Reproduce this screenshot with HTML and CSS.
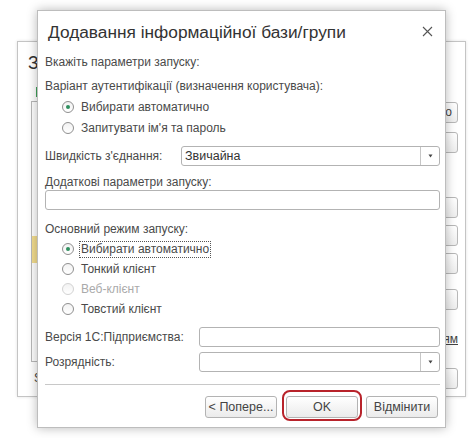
FILE: index.html
```html
<!DOCTYPE html>
<html lang="uk">
<head>
<meta charset="utf-8">
<title>Додавання інформаційної бази/групи</title>
<link rel="stylesheet" href="styles.css">
</head>
<body>
<div class="desk">
  <div class="bgwin">
    <div class="bg-title">З</div>
    <div class="bg-body">
      <div class="bg-left">
        <div class="bg-mark"></div>
        <div class="bg-list">
          <div class="bg-sel"></div>
        </div>
        <div class="bg-foot">S</div>
      </div>
      <div class="bg-right">
        <div class="bg-btn b1">1С:Підприємство</div>
        <div class="bg-btn b2"></div>
        <div class="bg-btn b3"></div>
        <div class="bg-btn b4"></div>
        <div class="bg-btn b5"></div>
        <div class="bg-btn b6"></div>
        <div class="bg-link">Налаштування ям</div>
        <div class="bg-btn b7"></div>
      </div>
    </div>
  </div>

  <div class="dialog">
    <div class="dlg-head">
      <div class="dlg-title">Додавання інформаційної бази/групи</div>
      <div class="dlg-close">
        <svg width="11" height="11" viewBox="0 0 11 11"><path d="M1 1 L10 10 M10 1 L1 10" stroke="#555" stroke-width="1.1" fill="none"/></svg>
      </div>
    </div>

    <div class="row lbl r-hint">Вкажіть параметри запуску:</div>
    <div class="row lbl r-auth">Варіант аутентифікації (визначення користувача):</div>
    <div class="radio-row"><span class="radio on"></span><span class="rtext">Вибирати автоматично</span></div>
    <div class="radio-row"><span class="radio"></span><span class="rtext">Запитувати ім'я та пароль</span></div>

    <div class="row field r-speed">
      <span class="flabel w-speed">Швидкість з'єднання:</span>
      <div class="combo"><span class="combo-val">Звичайна</span><span class="combo-btn"><svg width="7" height="4" viewBox="0 0 7 4"><path d="M1.5 0.5 H5.5 L3.5 3.5 Z" fill="#444"/></svg></span></div>
    </div>

    <div class="row lbl r-extra">Додаткові параметри запуску:</div>
    <div class="input full"></div>

    <div class="row lbl r-mode">Основний режим запуску:</div>
    <div class="radio-row r20"><span class="radio on"></span><span class="rtext focus">Вибирати автоматично</span></div>
    <div class="radio-row r20"><span class="radio"></span><span class="rtext">Тонкий клієнт</span></div>
    <div class="radio-row r20 disabled"><span class="radio"></span><span class="rtext">Веб-клієнт</span></div>
    <div class="radio-row r20"><span class="radio"></span><span class="rtext">Товстий клієнт</span></div>

    <div class="row field r-ver">
      <span class="flabel w-ver">Версія 1С:Підприємства:</span>
      <div class="input grow"></div>
    </div>
    <div class="row field r-bits">
      <span class="flabel w-ver">Розрядність:</span>
      <div class="combo"><span class="combo-val"></span><span class="combo-btn"><svg width="7" height="4" viewBox="0 0 7 4"><path d="M1.5 0.5 H5.5 L3.5 3.5 Z" fill="#444"/></svg></span></div>
    </div>

    <div class="sep"></div>

    <div class="buttons">
      <div class="btn b-prev">&lt; Попере...</div>
      <div class="btn b-ok">OK</div>
      <div class="btn b-cancel">Відмінити</div>
    </div>
  </div>
</div>
</body>
</html>
```

FILE: styles.css
```css
* { box-sizing: border-box; }
html, body { margin: 0; padding: 0; background: #fff; }
body {
  width: 474px; height: 438px; overflow: hidden;
  font-family: "Liberation Sans", Arial, sans-serif;
  font-size: 12px; color: #4a4a4a;
}
.desk { position: relative; width: 474px; height: 438px; }

/* background window */
.bgwin {
  position: absolute; left: 17px; top: 41px; width: 449px; height: 356px;
  border: 1px solid #c4c4c4; background: #fff;
  box-shadow: 0 0 3px rgba(0,0,0,0.12);
  padding: 8px 7px 0 10px;
  overflow: hidden;
}
.bg-title { font-size: 17.5px; color: #333; height: 26px; line-height: 26px; white-space: nowrap; }
.bg-body { display: flex; height: 310px; }
.bg-left { width: 120px; position: relative; padding-left: 3px; }
.bg-mark { width: 2px; height: 10px; background: #3fa45a; margin: 11px 0 0 5px; }
.bg-list {
  margin-top: 4px; height: 261px; border: 1px solid #b8b8b8; border-right: none;
  width: 120px; padding-top: 134px;
}
.bg-sel { height: 27px; background: #f3dd8e; width: 5px; }
.bg-foot { font-size: 12px; color: #444; margin: 9px 0 0 3px; }
.bg-right { margin-left: auto; width: 110px; display: flex; flex-direction: column; }
.bg-btn {
  flex: none; height: 21px; border: 1px solid #b8b8b8; border-radius: 3px;
  background: linear-gradient(#fff, #eee); font-size: 12px; color: #444;
  line-height: 19px; padding-right: 5px; text-align: right;
  white-space: nowrap; overflow: hidden;
}
.b1 { margin-top: 26px; }
.b2 { margin-top: 9px; }
.b3 { margin-top: 44px; }
.b4 { margin-top: 7px; }
.b5 { margin-top: 7px; }
.b6 { margin-top: 15px; }
.bg-link {
  flex: none; height: 16px; margin-top: 21px; line-height: 16px;
  font-size: 12px; color: #444; text-decoration: underline;
  text-align: right; white-space: nowrap; padding-right: 0;
}
.b7 { margin-top: 21px; }

/* dialog */
.dialog {
  position: absolute; left: 37px; top: 10px; width: 409px; height: 418px;
  background: #fff; border: 1px solid #bdbdbd;
  box-shadow: 0 0 10px rgba(0,0,0,0.28);
  padding: 0 5px 0 7px;
}
.dlg-head { height: 41px; display: flex; align-items: center; padding: 0 6px 0 3px; }
.dlg-title { font-size: 17.3px; color: #333; flex: 1; white-space: nowrap; margin-top: 2px; }
.dlg-close { width: 11px; height: 11px; display: flex; margin-right: 1px; }

.row { display: flex; align-items: center; white-space: nowrap; }
.lbl { height: 20px; }
.r-auth { margin-top: 4px; }
.radio-row { display: flex; align-items: center; height: 21px; padding-left: 17px; white-space: nowrap; }
.radio-row.r20 { height: 20px; }
.radio {
  width: 12px; height: 12px; border-radius: 50%;
  border: 1px solid #8f8f8f; background: linear-gradient(#f2f2f2, #fff);
  display: inline-flex; align-items: center; justify-content: center; flex: none;
}
.radio.on::after { content: ""; width: 4px; height: 4px; border-radius: 50%; background: #2f8f5f; }
.rtext { margin-left: 6px; padding: 0 1px; }
.rtext.focus { outline: 1px dotted #555; outline-offset: 0; line-height: 15px; }
.disabled .radio { border-color: #d2d2d2; }
.disabled .rtext { color: #aaa; }

.field { height: 20px; }
.r-speed { margin-top: 8px; }
.flabel { flex: none; }
.w-speed { width: 136px; }
.w-ver { width: 154px; }
.combo {
  flex: 1; height: 20px; border: 1px solid #b3b3b3; border-radius: 3px;
  display: flex; align-items: center; background: #fff;
}
.combo-val { flex: 1; padding-left: 3px; color: #333; font-size: 12.5px; }
.combo-btn { width: 19px; height: 100%; border-left: 1px solid #c6c6c6; display: flex; align-items: center; justify-content: center; }
.r-extra { height: 17px; margin-top: 7px; }
.input { height: 20px; border: 1px solid #b3b3b3; border-radius: 3px; background: #fff; }
.input.grow { flex: 1; }
.r-mode { margin-top: 9px; }
.r-ver { margin-top: 8px; }
.r-bits { margin-top: 5px; }
.sep { height: 1px; background: #c8c8c8; margin-top: 12px; }
.buttons { display: flex; justify-content: flex-end; margin-top: 11px; padding-right: 2px; gap: 8px; }
.btn {
  height: 22px; border: 1px solid #b3b3b3; border-radius: 3px;
  background: linear-gradient(#fff, #ebebeb); color: #444;
  display: flex; align-items: center; justify-content: center; white-space: nowrap;
  font-size: 12.5px;
}
.b-prev { width: 72px; margin-right: 1px; }
.b-ok { width: 72px; position: relative; }
.b-ok::after {
  content: ""; position: absolute; left: -5px; right: -5px; top: -7px; bottom: -4px;
  border: 2px solid #b8232b; border-radius: 8px;
}
.b-cancel { width: 72px; }
```
